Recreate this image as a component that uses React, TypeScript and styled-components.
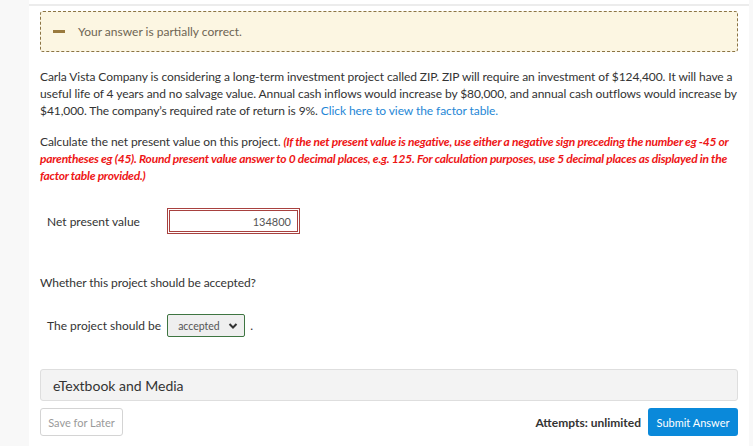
import React from "react";
import styled, { createGlobalStyle } from "styled-components";

const Global = createGlobalStyle`
  html, body { margin: 0; padding: 0; background: #f8f8f8; }
  body { font-family: Lato, "Open Sans", sans-serif; }
  * { box-sizing: border-box; }
`;

const Page = styled.div`
  display: flex;
  min-height: 446px;
  background: #f8f8f8;
`;

const Gutter = styled.div<{ $w: number }>`
  width: ${(p) => p.$w}px;
  flex: none;
`;

const Main = styled.main`
  flex: 1;
  background: #fff;
  padding-top: 4px;
`;

const Divider = styled.div`
  height: 2px;
  background: #ececec;
`;

const Content = styled.div`
  padding: 5px 11px 0 11px;
  display: flex;
  flex-direction: column;
`;

const Banner = styled.div`
  height: 41px;
  border: 1px dashed #8b7444;
  border-radius: 3px;
  background: #fcf6e2;
  display: flex;
  align-items: center;
  padding-left: 12px;
  gap: 13px;
`;

const Minus = styled.span`
  width: 12px;
  height: 3px;
  background: #9a7a3e;
  display: block;
`;

const BannerText = styled.span`
  font-size: 12px;
  color: #6e6552;
`;

const Para = styled.p<{ $mt: number }>`
  margin: ${(p) => p.$mt}px 0 0 0;
  font-size: 12px;
  line-height: 17px;
  letter-spacing: -0.08px;
  color: #333;
`;

const Link = styled.a`
  color: #1f87d6;
  text-decoration: none;
`;

const Hint = styled.em`
  color: #ee1515;
  font-weight: 700;
  font-style: italic;
  letter-spacing: -0.25px;
`;

const Row = styled.div<{ $mt: number }>`
  margin-top: ${(p) => p.$mt}px;
  padding-left: 7px;
  display: flex;
  align-items: center;
  font-size: 12px;
  color: #333;
`;

const Label = styled.span<{ $w?: number }>`
  width: ${(p) => (p.$w ? `${p.$w}px` : "auto")};
  flex: none;
`;

const NumberInput = styled.div`
  width: 133px;
  height: 26px;
  border: 1px solid #a8413f;
  box-shadow: inset 0 0 0 1px #fff, inset 0 0 0 2px #a8413f;
  display: flex;
  align-items: center;
  justify-content: flex-end;
  padding-right: 8px;
  font-size: 11px;
  color: #555;
`;

const Select = styled.div`
  margin-left: 6px;
  width: 78px;
  height: 23px;
  border: 1px solid #3e7541;
  border-radius: 2px;
  background: #efefef;
  display: flex;
  align-items: center;
  justify-content: space-between;
  padding: 1px 6px 0 10px;
  font-size: 10.5px;
  color: #555;
`;

const Dot = styled.span`
  margin-left: 5px;
`;

const MediaBox = styled.div`
  margin-top: 32px;
  height: 32px;
  border: 1px solid #dedede;
  border-radius: 3px;
  background: #f3f3f3;
  display: flex;
  align-items: center;
  padding-left: 12px;
  font-size: 14px;
  color: #333;
`;

const Footer = styled.div`
  margin-top: 7px;
  display: flex;
  align-items: center;
`;

const SaveButton = styled.button`
  width: 83px;
  height: 28px;
  border: 1px solid #d4d4d4;
  border-radius: 3px;
  background: #fff;
  font-family: Lato, sans-serif;
  font-size: 11px;
  color: #9a9a9a;
  padding: 0;
`;

const Attempts = styled.span`
  margin-left: auto;
  font-size: 12px;
  font-weight: 700;
  color: #333;
  margin-right: 7px;
`;

const SubmitButton = styled.button`
  width: 90px;
  height: 28px;
  border: none;
  border-radius: 3px;
  background: #0a89da;
  font-family: Lato, sans-serif;
  font-size: 11px;
  color: #fff;
  padding: 0;
`;

export default function App() {
  return (
    <>
      <Global />
      <Page>
        <Gutter $w={29} />
        <Main>
          <Divider />
          <Content>
            <Banner>
              <Minus />
              <BannerText>Your answer is partially correct.</BannerText>
            </Banner>
            <Para $mt={16}>
              Carla Vista Company is considering a long-term investment project called ZIP. ZIP will require an
              investment of $124,400. It will have a useful life of 4 years and no salvage value. Annual cash inflows
              would increase by $80,000, and annual cash outflows would increase by $41,000. The company’s required
              rate of return is 9%. <Link href="#">Click here to view the factor table.</Link>
            </Para>
            <Para $mt={14}>
              Calculate the net present value on this project.{" "}
              <Hint>
                (If the net present value is negative, use either a negative sign preceding the number eg -45 or
                parentheses eg (45). Round present value answer to 0 decimal places, e.g. 125. For calculation
                purposes, use 5 decimal places as displayed in the factor table provided.)
              </Hint>
            </Para>
            <Row $mt={24}>
              <Label $w={120}>Net present value</Label>
              <NumberInput>134800</NumberInput>
            </Row>
            <Para $mt={40}>Whether this project should be accepted?</Para>
            <Row $mt={23}>
              <Label>The project should be</Label>
              <Select>
                <span>accepted</span>
                <svg width="10" height="8" viewBox="0 0 10 8">
                  <path d="M1.5 2 L5 5.5 L8.5 2" fill="none" stroke="#333" strokeWidth="2" />
                </svg>
              </Select>
              <Dot>.</Dot>
            </Row>
            <MediaBox>eTextbook and Media</MediaBox>
            <Footer>
              <SaveButton>Save for Later</SaveButton>
              <Attempts>Attempts: unlimited</Attempts>
              <SubmitButton>Submit Answer</SubmitButton>
            </Footer>
          </Content>
        </Main>
        <Gutter $w={4} />
      </Page>
    </>
  );
}
